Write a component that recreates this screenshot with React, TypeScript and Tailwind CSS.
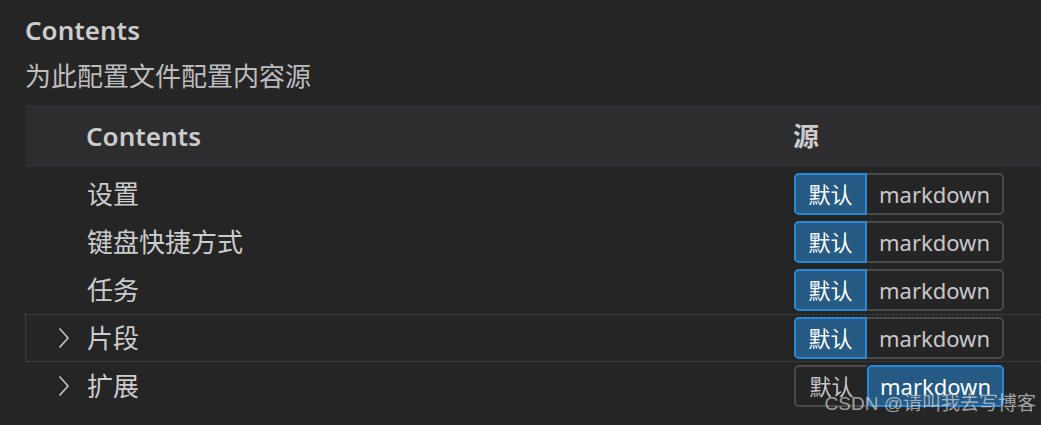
import React from "react";

type Row = { label: string; source: "default" | "markdown"; expandable?: boolean; focused?: boolean };

const rows: Row[] = [
  { label: "设置", source: "default" },
  { label: "键盘快捷方式", source: "default" },
  { label: "任务", source: "default" },
  { label: "片段", source: "default", expandable: true, focused: true },
  { label: "扩展", source: "markdown", expandable: true },
];

const font = { fontFamily: '"Noto Sans", "Noto Sans CJK SC", sans-serif' };

function Chevron() {
  return (
    <svg width="12" height="22" viewBox="0 0 12 22" fill="none" className="shrink-0">
      <polyline points="1.5,1.5 10,11 1.5,20.5" stroke="#c5c5c5" strokeWidth="1.6" strokeLinejoin="miter" />
    </svg>
  );
}

function SourceToggle({ value }: { value: Row["source"] }) {
  const isDefault = value === "default";
  return (
    <div className="flex h-[42px] text-[22px]">
      <div
        className={
          isDefault
            ? "flex w-[73px] items-center justify-center rounded-l-[5px] border-2 border-[#2b88d8] bg-[#245a84] text-white"
            : "flex w-[73px] items-center justify-center rounded-l-[5px] border-2 border-r-0 border-[#4a4a4c] text-[#c8c8c8]"
        }
      >
        默认
      </div>
      <div
        className={
          isDefault
            ? "flex w-[137px] items-center justify-center rounded-r-[5px] border-2 border-l-0 border-[#4a4a4c] text-[#c8c8c8]"
            : "flex w-[137px] items-center justify-center rounded-[5px] border-2 border-[#2b88d8] bg-[#245a84] text-white"
        }
      >
        markdown
      </div>
    </div>
  );
}

export default function App() {
  return (
    <div className="relative h-[425px] w-[1041px] overflow-hidden bg-[#252526] text-[#cccccc]" style={font}>
      <div className="pl-[25px]">
        <div className="mt-[12px] h-[36px] text-[26px] font-semibold leading-[36px]">Contents</div>
        <div className="mt-[10px] h-[36px] text-[26px] leading-[36px] text-[#bdbdbd]">为此配置文件配置内容源</div>

        <div className="mt-[11px] grid h-[62px] grid-cols-[768px_1fr] items-center bg-[#2d2d30] text-[26px] font-semibold">
          <div className="pl-[61px]">Contents</div>
          <div>源</div>
        </div>

        <div className="pt-[3px]">
          {rows.map((row) => (
            <div
              key={row.label}
              className={
                row.focused
                  ? "grid h-[48px] grid-cols-[768px_1fr] items-center border border-r-0 border-dotted border-[#4e4e50]"
                  : "grid h-[48px] grid-cols-[768px_1fr] items-center border border-transparent"
              }
            >
              <div className="flex items-center pl-[32px] text-[26px]">
                <div className="flex w-[29px] items-center">{row.expandable && <Chevron />}</div>
                <span>{row.label}</span>
              </div>
              <SourceToggle value={row.source} />
            </div>
          ))}
        </div>
      </div>

      <div
        className="absolute right-[5px] top-[393px] text-[19px] leading-[22px] text-[rgba(215,215,215,0.7)]"
        style={{ fontFamily: '"Liberation Sans", "Noto Sans CJK SC", sans-serif' }}
      >
        CSDN @请叫我去写博客
      </div>
    </div>
  );
}
